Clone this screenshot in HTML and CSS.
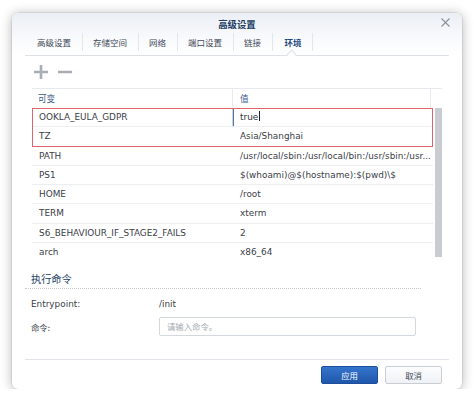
FILE: index.html
```html
<!DOCTYPE html>
<html lang="zh">
<head>
<meta charset="utf-8">
<title>高级设置</title>
<link rel="stylesheet" href="styles.css">
</head>
<body>
<div class="page">
  <div class="win">
    <div class="head">
      <div class="titlebar">
        <span class="title">高级设置</span>
        <span class="close"><svg width="9" height="9" viewBox="0 0 9 9"><path d="M0.5 0.5 L8.5 8.5 M8.5 0.5 L0.5 8.5" stroke="#8a929b" stroke-width="1.1" fill="none"/></svg></span>
      </div>
      <div class="tabs">
        <div class="tab">高级设置</div>
        <div class="tab">存储空间</div>
        <div class="tab">网络</div>
        <div class="tab">端口设置</div>
        <div class="tab">链接</div>
        <div class="tab active">环境</div>
      </div>
    </div>

    <div class="toolbar">
      <svg class="tool" width="14" height="14" viewBox="0 0 14 14"><path d="M7 0 V14 M0 7 H14" stroke="#a7aeb6" stroke-width="2.6" fill="none"/></svg>
      <svg class="tool" width="14" height="14" viewBox="0 0 14 14"><path d="M0 7 H14" stroke="#a7aeb6" stroke-width="2.6" fill="none"/></svg>
    </div>

    <div class="grid">
      <div class="ghead">
        <div class="hc key">可变</div>
        <div class="hc val">值</div>
        <div class="hc spare"></div>
      </div>
      <div class="gbody">
        <div class="rows">
          <div class="hl">
            <div class="row editing">
              <div class="c key">OOKLA_EULA_GDPR</div>
              <div class="c val"><span class="editor">true<span class="caret"></span></span></div>
            </div>
            <div class="row">
              <div class="c key">TZ</div>
              <div class="c val">Asia/Shanghai</div>
            </div>
          </div>
          <div class="row"><div class="c key">PATH</div><div class="c val">/usr/local/sbin:/usr/local/bin:/usr/sbin:/usr...</div></div>
          <div class="row"><div class="c key">PS1</div><div class="c val">$(whoami)@$(hostname):$(pwd)\$</div></div>
          <div class="row"><div class="c key">HOME</div><div class="c val">/root</div></div>
          <div class="row"><div class="c key">TERM</div><div class="c val">xterm</div></div>
          <div class="row"><div class="c key">S6_BEHAVIOUR_IF_STAGE2_FAILS</div><div class="c val">2</div></div>
          <div class="row last"><div class="c key">arch</div><div class="c val">x86_64</div></div>
        </div>
        <div class="scroll"><div class="thumb"></div></div>
      </div>
    </div>

    <div class="section">
      <div class="stitle">执行命令</div>
      <div class="frow">
        <div class="flabel">Entrypoint:</div>
        <div class="fval">/init</div>
      </div>
      <div class="frow">
        <div class="flabel cjk">命令:</div>
        <div class="finput">请输入命令。</div>
      </div>
    </div>

    <div class="footer">
      <button class="btn primary">应用</button>
      <button class="btn">取消</button>
    </div>
  </div>
</div>
</body>
</html>
```

FILE: styles.css
```css
html, body {
  margin: 0;
  padding: 0;
  background: #ffffff;
}
body {
  font-family: "DejaVu Sans", "Noto Sans CJK SC", sans-serif;
  font-size: 8.9px;
  color: #3b4048;
}
.page {
  padding: 13px 0 0 12px;
}
.win {
  width: 450px;
  height: 376px;
  background: #fff;
  border-radius: 6px;
  box-shadow: 0 1px 12px rgba(0, 0, 0, 0.30), 0 0 0 0.5px rgba(0,0,0,0.12);
  display: flex;
  flex-direction: column;
  overflow: hidden;
}
.head {
  background: linear-gradient(#ebeff5, #f9fafc 60%, #ffffff);
}
.titlebar {
  height: 20px;
  position: relative;
  display: flex;
  align-items: center;
  justify-content: center;
}
.title {
  font-family: "Noto Sans CJK SC", sans-serif;
  font-size: 9.4px;
  font-weight: 700;
  color: #203a62;
  padding-top: 1px;
}
.close {
  position: absolute;
  right: 12px;
  top: 5px;
  width: 9px;
  height: 9px;
  display: block;
}
.close svg { display: block; }
.tabs {
  margin: 0 13px;
  height: 22px;
  border-bottom: 1px solid #dde1e6;
  display: flex;
  align-items: flex-start;
}
.tab {
  font-family: "Noto Sans CJK SC", sans-serif;
  font-size: 8.5px;
  color: #3f4a5a;
  height: 18px;
  line-height: 19px;
  padding: 0 10.5px;
  border-right: 1px solid #e3e6ea;
  position: relative;
}
.tab:first-child { padding-left: 12px; }
.tab.active {
  color: #1d4680;
  font-weight: 700;
  padding-left: 12px;
}
.tab.active::after {
  content: "";
  position: absolute;
  left: 50%;
  bottom: -7px;
  width: 6px;
  height: 6px;
  margin-left: -4px;
  background: #fff;
  border-left: 1px solid #dde1e6;
  border-top: 1px solid #dde1e6;
  transform: rotate(45deg);
}
.toolbar {
  height: 32px;
  display: flex;
  align-items: center;
  gap: 10px;
  padding-left: 22px;
}
.tool { display: block; }
.grid {
  margin-left: 20px;
  width: 410px;
}
.ghead {
  display: flex;
  height: 20px;
  border-top: 1px solid #e6e9ed;
  box-sizing: border-box;
}
.hc {
  font-family: "Noto Sans CJK SC", sans-serif;
  font-size: 8.6px;
  color: #36598a;
  line-height: 19px;
  box-sizing: border-box;
}
.hc.key { width: 201px; padding-left: 6px; border-right: 1px solid #e8ebee; }
.hc.val { width: 198px; padding-left: 7px; border-right: 1px solid #e8ebee; }
.hc.spare { flex: 1; }
.gbody {
  display: flex;
  align-items: flex-start;
}
.rows {
  width: 401px;
}
.hl {
  outline: 1px solid #e0636e;
  outline-offset: -1px;
  position: relative;
}
.row {
  display: flex;
  height: 19.3px;
  box-sizing: border-box;
  border-bottom: 1px solid #eceef1;
}
.row.last { border-bottom: none; }
.c {
  line-height: 18.5px;
  white-space: nowrap;
  overflow: hidden;
  box-sizing: border-box;
}
.c.key { width: 201px; padding-left: 7px; }
.c.val { width: 200px; padding-left: 7px; }
.row.editing .c.key {
  border-right: 1px solid #c4d5ea;
}
.row.editing .c.val {
  padding: 0;
}
.editor {
  display: block;
  height: 19px;
  border: 1px solid #56739a;
  box-sizing: border-box;
  padding-left: 6px;
  line-height: 17px;
  color: #2f343b;
  background: #fff;
}
.caret {
  display: inline-block;
  width: 0;
  height: 10px;
  border-left: 1px solid #222;
  vertical-align: -1px;
  margin-left: 1px;
}
.scroll {
  margin-left: 2px;
  width: 7px;
}
.thumb {
  height: 149px;
  background: #c9cdd2;
}
.section {
  margin: 10px 13px 0 13px;
  width: 396px;
}
.stitle {
  font-family: "Noto Sans CJK SC", sans-serif;
  font-size: 10.2px;
  color: #233d66;
  line-height: 14px;
  padding: 0 0 2px 6px;
  border-bottom: 1px dotted #c4c9cf;
}
.frow {
  display: flex;
  align-items: center;
  height: 18px;
  padding-left: 6px;
  margin-top: 6px;
}
.frow + .frow {
  margin-top: 4px;
  height: 19px;
}
.flabel {
  width: 128px;
  color: #3b4048;
}
.flabel.cjk {
  font-family: "Noto Sans CJK SC", sans-serif;
  font-size: 8.4px;
}
.fval { color: #3b4048; }
.finput {
  width: 257px;
  height: 19px;
  box-sizing: border-box;
  border: 1px solid #d3d8de;
  border-radius: 2px;
  padding-left: 7px;
  font-family: "Noto Sans CJK SC", sans-serif;
  font-size: 8.4px;
  color: #a3a9b1;
  line-height: 17px;
}
.footer {
  margin: auto 13px 0 13px;
  border-top: 1px solid #e1e4e8;
  padding: 6px 7px 5px 0;
  display: flex;
  justify-content: flex-end;
  gap: 7px;
}
.btn {
  width: 57px;
  height: 18px;
  box-sizing: border-box;
  border: 1px solid #c9ced5;
  border-radius: 2px;
  background: linear-gradient(#fdfdfe, #eef1f5);
  font-family: "Noto Sans CJK SC", sans-serif;
  font-size: 8.4px;
  color: #3d4858;
  padding: 0;
  margin: 0;
}
.btn.primary {
  border-color: #1d4f9c;
  background: linear-gradient(#3574cc, #1f57aa);
  color: #ffffff;
}
```
